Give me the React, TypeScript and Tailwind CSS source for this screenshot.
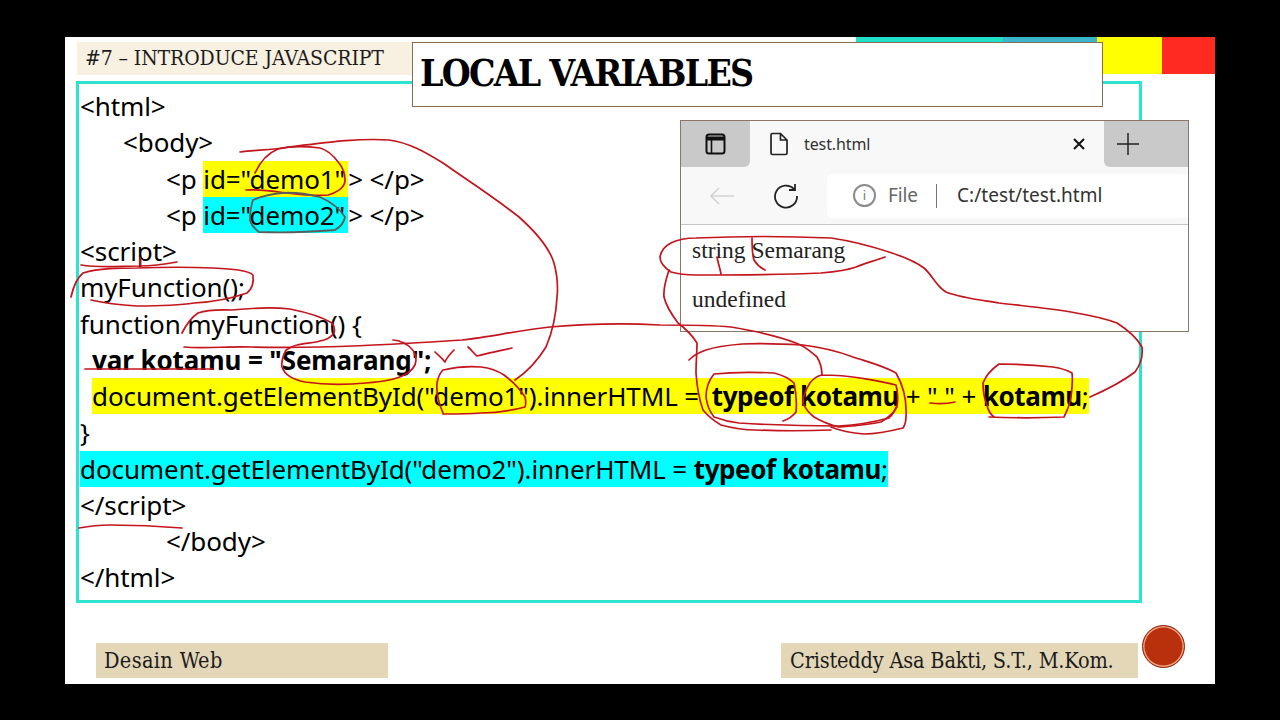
import React from 'react';

// hand-drawn pen marks, page coordinates
const marks = [
  'M240 152 C255 150 270 150 290 147 C330 142 360 138 389 140 C410 143 425 152 443 163 C470 182 495 198 519 217 C538 234 550 250 554 263 C558 278 558 288 557 297 C556 318 552 333 546 347 C538 360 527 372 515 380',
  'M246 190 C270 188 300 198 328 195 C338 192 345 188 345 180 C345 172 343 168 339 163 C333 155 328 150 320 148 C305 146 290 146 278 149 C268 153 260 162 255 173',
  'M81 265 C100 268 120 266 140 266 C155 266 166 264 177 262 M140 258 L140 266',
  'M71 297 C73 288 77 278 83 273 C100 268 118 268 137 268 C165 267 190 267 213 268 C232 269 248 270 253 275 C254 283 252 289 247 293 C230 299 212 302 194 303 C175 306 155 306 137 306 C120 305 104 303 91 300',
  'M182 333 C187 323 192 317 198 313 C210 309 220 310 232 310 C252 308 272 307 290 309 C305 312 322 317 332 323 C335 327 335 330 334 333 C331 337 328 339 324 340 C315 343 305 343 297 345 C292 346 290 348 286 350 C283 356 281 361 282 367 C285 376 295 380 305 382 C325 385 345 385 366 383 C380 382 395 380 404 375 C411 372 416 366 416 360 C416 352 410 346 404 343 C400 341 396 340 393 340',
  'M184 347 C205 349 230 346 251 347 C320 349 400 344 462 340 C490 337 520 330 550 327 C585 324 625 323 660 325 C690 325 710 325 731 327 C755 331 778 336 796 343 C805 346 811 352 817 357 C820 362 822 368 822 375 C835 375 848 376 860 378 C872 380 885 382 896 385 C898 392 898 400 897 407 C893 414 888 418 881 422 C868 425 852 426 839 427 C830 425 821 421 814 417 C809 413 805 408 803 403 C803 396 806 389 810 383 C813 379 817 376 822 375',
  'M689 360 C694 355 700 352 706 350 C718 346 730 345 742 344 C762 343 783 344 803 345 C820 347 837 351 853 357 C868 362 884 366 896 373 C903 385 907 400 906 417 C906 422 905 425 903 428 C891 431 878 434 864 434 C852 433 841 431 831 427',
  'M783 421 C789 419 793 416 796 412 C797 402 796 392 794 383 C789 378 782 375 774 373 C755 372 733 372 714 374 C709 380 706 388 706 397 C707 405 710 412 714 417 C722 420 730 422 739 423 C772 425 806 426 839 426 C857 425 874 422 889 418 C892 415 895 411 896 407',
  'M669 270 C666 279 663 288 664 297 C666 306 672 315 678 323 C686 329 692 335 697 343 C697 352 696 362 696 373 C697 387 699 399 703 410 C708 416 714 421 721 425 C732 428 744 430 756 430 C781 431 806 431 831 430',
  'M885 257 C875 261 865 263 856 267 C845 271 833 272 821 273 C780 275 738 275 696 275 C687 275 678 274 671 272 C665 268 660 263 660 257 C661 251 665 246 671 243 C679 239 688 238 696 238 C741 236 786 236 831 238 C852 241 874 247 892 253 C904 257 916 262 924 268 C933 276 936 286 946 292 C961 298 981 300 999 303 C1024 306 1048 308 1071 312 C1088 315 1104 318 1117 323 C1128 330 1137 338 1142 347 C1143 355 1141 364 1135 372 C1122 382 1106 390 1090 397',
  'M717 257 C718 263 720 268 721 274',
  'M752 238 C752 246 752 254 754 260 C757 265 761 268 765 270',
  'M85 369 L213 369',
  'M435 352 C438 355 442 358 445 362 C447 357 451 353 454 350',
  'M468 347 C472 350 474 354 477 356 C488 353 500 351 512 348',
  'M443 413 C439 404 436 394 437 383 C438 377 440 373 443 370 C456 367 469 366 481 367 C490 368 498 371 504 375 C512 381 520 389 525 397 C526 401 526 404 525 407 C510 411 496 413 481 413 C468 414 455 414 443 414',
  'M930 403 C938 404 947 404 955 402',
  'M994 417 C990 414 988 410 987 405 C984 398 983 390 983 383 C986 375 992 369 999 364 C1017 364 1035 365 1053 367 C1060 368 1067 370 1072 373 C1073 381 1072 389 1071 397 C1070 404 1067 411 1064 417 C1040 418 1013 418 989 417',
  'M79 528 C90 526 100 525 110 525 C134 525 158 526 182 528',
];

// demo2 is circled in a darker pen
const grayMark = 'M253 200 C262 196 272 194 282 193 C295 192 308 194 320 197 C331 202 340 209 345 217 C344 223 340 227 335 230 C310 232 284 233 259 232 C255 229 251 225 250 220 C250 213 251 206 253 200';

const Line = ({ indent = '', children }: { indent?: string; children?: React.ReactNode }) => (
  <div className={`h-[36.28px] leading-[36.28px] whitespace-nowrap ${indent}`}>{children}</div>
);

const Bold = ({ children }: { children: React.ReactNode }) => (
  <b className="tracking-[-0.42px]">{children}</b>
);

const FileIcon = () => (
  <svg width="20" height="24" viewBox="0 0 20 24" fill="none" stroke="#222" strokeWidth="1.7">
    <path d="M2 3 Q2 1.500 3.500 1.500 L11.500 1.500 L18 8 L18 21 Q18 22.500 16.500 22.500 L3.500 22.500 Q2 22.500 2 21 Z M11.500 1.500 L11.500 8 L18 8" />
  </svg>
);

export default function App() {
  return (
    <div className="h-[720px] w-[1280px] bg-black overflow-hidden pt-[37px] pl-[65px]">
      <div className="relative h-[647px] w-[1150px] bg-white">
        {/* accent strip top right */}
        <div className="flex justify-end items-start">
          <div className="w-[147px] h-[6px] bg-[#1fe0c6]" />
          <div className="w-[94px] h-[6px] bg-[#3bb5cc]" />
          <div className="w-[65px] h-[37px] bg-[#ffff00]" />
          <div className="w-[53px] h-[37px] bg-[#ff2a20]" />
        </div>

        <div className="absolute left-[12px] top-[5px] w-[340px] h-[33px] bg-[#f8f0e0] pl-[8px] leading-[33px] text-[21px] text-[#1c1c1c] font-['DejaVu_Serif_Condensed','DejaVu_Serif',serif] tracking-[-0.1px] whitespace-nowrap">
          #7 – INTRODUCE JAVASCRIPT
        </div>

        {/* code frame */}
        <div className="absolute left-[11px] top-[44px] w-[1066px] h-[522px] border-[3px] border-[#2de5cf] pt-[4px] pl-[1px] text-[26px] text-black font-['Noto_Sans',sans-serif] tracking-[-0.1px]">
          <Line>&lt;html&gt;</Line>
          <Line indent="pl-[43px]">&lt;body&gt;</Line>
          <Line indent="pl-[86px]">
            &lt;p <span className="inline-block bg-[#ffff00] pr-[3px]">id="demo1"</span>&gt; &lt;/p&gt;
          </Line>
          <Line indent="pl-[86px]">
            &lt;p <span className="inline-block bg-[#00ffff] pr-[3px]">id="demo2"</span>&gt; &lt;/p&gt;
          </Line>
          <Line>&lt;script&gt;</Line>
          <Line>myFunction();</Line>
          <Line>function myFunction() {'{'}</Line>
          <Line indent="pl-[12px] font-bold">var kotamu = "Semarang";</Line>
          <Line indent="pl-[12px]">
            <span className="inline-block bg-[#ffff00]">
              document.getElementById("demo1").innerHTML = <span className="ml-[6px]"><Bold>typeof kotamu</Bold></span> + " " + <Bold>kotamu</Bold>;
            </span>
          </Line>
          <Line>{'}'}</Line>
          <Line>
            <span className="inline-block bg-[#00ffff]">
              document.getElementById("demo2").innerHTML = <Bold>typeof kotamu</Bold>;
            </span>
          </Line>
          <Line>&lt;/script&gt;</Line>
          <Line indent="pl-[86px]">&lt;/body&gt;</Line>
          <Line>&lt;/html&gt;</Line>
        </div>

        {/* slide title */}
        <div className="absolute left-[347px] top-[5px] w-[691px] h-[65px] bg-white border border-[#8a6a50] pl-[7px] leading-[60px] text-[37px] font-bold text-black font-['DejaVu_Serif_Condensed','DejaVu_Serif',serif] tracking-[-1.75px] whitespace-nowrap">
          LOCAL VARIABLES
        </div>

        {/* browser screenshot */}
        <div className="absolute left-[615px] top-[83px] w-[509px] h-[212px] bg-white border border-[#8b7765] overflow-hidden font-['Noto_Sans',sans-serif]">
          <div className="flex h-[46px] bg-[#f8f8f8]">
            <div className="w-[69px] rounded-br-[6px] bg-[#c9c9c9] flex items-center justify-center">
              <svg width="21" height="22" viewBox="0 0 21 22" fill="none" stroke="#111" strokeWidth="2">
                <rect x="1.500" y="1.500" width="18" height="19" rx="2.500" />
                <path d="M1.500 5.500 H19.500" strokeWidth="4" />
                <path d="M6.500 6 V20" strokeWidth="1.600" />
              </svg>
            </div>
            <div className="w-[354px] flex items-center pl-[19px]">
              <FileIcon />
              <span className="ml-[15px] text-[16px] text-[#333] tracking-[-0.1px]">test.html</span>
              <svg className="ml-auto mr-[18px]" width="14" height="14" viewBox="0 0 14 14" stroke="#111" strokeWidth="2">
                <path d="M2 2 L12 12 M12 2 L2 12" />
              </svg>
            </div>
            <div className="flex-1 rounded-bl-[6px] bg-[#c9c9c9] pl-[13px] flex items-center">
              <svg width="22" height="22" viewBox="0 0 22 22" stroke="#222" strokeWidth="1.500">
                <path d="M11 0 V22 M0 11 H22" />
              </svg>
            </div>
          </div>
          <div className="flex h-[58px] items-center bg-[#f8f8f8] border-b border-[#c4c4c4] pl-[28px]">
            <svg width="26" height="20" viewBox="0 0 26 20" fill="none" stroke="#d2d2d2" strokeWidth="1.600">
              <path d="M25 10 H2 M10 2 L2 10 L10 18" />
            </svg>
            <svg className="ml-[38px]" width="26" height="26" viewBox="0 0 26 26" fill="none" stroke="#222" strokeWidth="1.800">
              <path d="M21 6 A11 11 0 1 0 24 13 M22 1 V7 H16" />
            </svg>
            <div className="ml-[28px] flex-1 h-[44px] bg-white rounded-l-[6px] flex items-center pl-[26px]">
              <div className="w-[23px] h-[23px] rounded-full border-2 border-[#8a8a8a] flex items-center justify-center text-[13px] text-[#777] leading-none">i</div>
              <span className="ml-[12px] text-[19px] text-[#666] tracking-[-0.1px]">File</span>
              <div className="ml-[18px] w-[1px] h-[24px] bg-[#777]" />
              <span className="ml-[20px] text-[19px] text-[#333] tracking-[0.05px]">C:/test/test.html</span>
            </div>
          </div>
          <div className="pl-[11px] pt-[12px] font-['Liberation_Serif',serif] text-[23.5px] text-[#222] leading-[26px]">
            <div>string Semarang</div>
            <div className="mt-[23px]">undefined</div>
          </div>
        </div>

        {/* footer labels */}
        <div className="absolute left-[31px] right-[77px] top-[606px] flex items-start font-['DejaVu_Serif_Condensed','DejaVu_Serif',serif] text-[21.500px] text-[#1c1c1c]">
          <div className="w-[292px] h-[35px] leading-[35px] pl-[8px] bg-[#e4d7b8] tracking-[0.35px]">Desain Web</div>
          <div className="ml-auto w-[357px] h-[35px] leading-[35px] pl-[9px] bg-[#e4d7b8] whitespace-nowrap tracking-[-0.17px]">Cristeddy Asa Bakti, S.T., M.Kom.</div>
        </div>
        <div className="absolute left-[1077px] top-[588px] w-[43px] h-[43px] rounded-full bg-[#b8300c] border border-[#8f2a10] shadow-[inset_0_0_0_1.5px_#f0a080]" />

        {/* pen annotations */}
        <svg className="absolute inset-0" width="1150" height="647" viewBox="65 37 1150 647" fill="none" strokeLinecap="round" strokeLinejoin="round">
          {marks.map((d, i) => (
            <path key={i} d={d} stroke="#c4141c" strokeWidth="1.700" />
          ))}
          <path d={grayMark} stroke="#5c5c5c" strokeWidth="1.800" />
        </svg>
      </div>
    </div>
  );
}
